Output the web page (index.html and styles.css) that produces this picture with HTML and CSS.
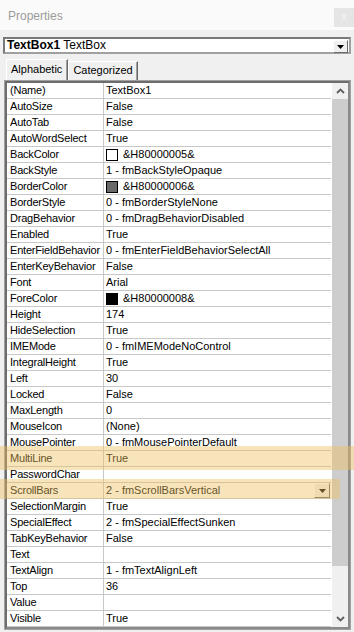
FILE: index.html
```html
<!DOCTYPE html>
<html lang="en">
<head>
  <meta charset="UTF-8" />
  <meta name="viewport" content="width=device-width, initial-scale=1.0" />
  <title>Properties</title>
  <link rel="stylesheet" href="styles.css">
</head>
<body>
<div class="titlebar">
  <span class="title">Properties</span>
  <span class="close">x</span>
</div>

<div class="combo">
  <span class="combo-text"><b>TextBox1</b> TextBox</span>
  <span class="drop-btn">
    <svg width="7" height="4" viewBox="0 0 7 4"><polygon points="0,0 7,0 3.5,4" fill="#000"/></svg>
  </span>
</div>

<div class="tabs">
  <div class="tab active">Alphabetic</div>
  <div class="tab">Categorized</div>
</div>

<div class="grid">
  <div class="grid-inner">
    <div class="rows">
      <div class="row"><div class="name">(Name)</div><div class="value">TextBox1</div></div>
      <div class="row"><div class="name">AutoSize</div><div class="value">False</div></div>
      <div class="row"><div class="name">AutoTab</div><div class="value">False</div></div>
      <div class="row"><div class="name">AutoWordSelect</div><div class="value">True</div></div>
      <div class="row"><div class="name">BackColor</div><div class="value"><span class="swatch swatch-white"></span>&amp;H80000005&amp;</div></div>
      <div class="row"><div class="name">BackStyle</div><div class="value">1 - fmBackStyleOpaque</div></div>
      <div class="row"><div class="name">BorderColor</div><div class="value"><span class="swatch swatch-gray"></span>&amp;H80000006&amp;</div></div>
      <div class="row"><div class="name">BorderStyle</div><div class="value">0 - fmBorderStyleNone</div></div>
      <div class="row"><div class="name">DragBehavior</div><div class="value">0 - fmDragBehaviorDisabled</div></div>
      <div class="row"><div class="name">Enabled</div><div class="value">True</div></div>
      <div class="row"><div class="name">EnterFieldBehavior</div><div class="value">0 - fmEnterFieldBehaviorSelectAll</div></div>
      <div class="row"><div class="name">EnterKeyBehavior</div><div class="value">False</div></div>
      <div class="row"><div class="name">Font</div><div class="value">Arial</div></div>
      <div class="row"><div class="name">ForeColor</div><div class="value"><span class="swatch swatch-black"></span>&amp;H80000008&amp;</div></div>
      <div class="row"><div class="name">Height</div><div class="value">174</div></div>
      <div class="row"><div class="name">HideSelection</div><div class="value">True</div></div>
      <div class="row"><div class="name">IMEMode</div><div class="value">0 - fmIMEModeNoControl</div></div>
      <div class="row"><div class="name">IntegralHeight</div><div class="value">True</div></div>
      <div class="row"><div class="name">Left</div><div class="value">30</div></div>
      <div class="row"><div class="name">Locked</div><div class="value">False</div></div>
      <div class="row"><div class="name">MaxLength</div><div class="value">0</div></div>
      <div class="row"><div class="name">MouseIcon</div><div class="value">(None)</div></div>
      <div class="row"><div class="name">MousePointer</div><div class="value">0 - fmMousePointerDefault</div></div>
      <div class="row"><div class="name">MultiLine</div><div class="value">True</div></div>
      <div class="row"><div class="name">PasswordChar</div><div class="value"></div></div>
      <div class="row">
        <div class="name">ScrollBars</div>
        <div class="value">
          <span class="value-text">2 - fmScrollBarsVertical</span>
          <span class="cell-btn">
            <svg width="7" height="4" viewBox="0 0 7 4"><polygon points="0,0 7,0 3.5,4" fill="#000"/></svg>
          </span>
        </div>
      </div>
      <div class="row"><div class="name">SelectionMargin</div><div class="value">True</div></div>
      <div class="row"><div class="name">SpecialEffect</div><div class="value">2 - fmSpecialEffectSunken</div></div>
      <div class="row"><div class="name">TabKeyBehavior</div><div class="value">False</div></div>
      <div class="row"><div class="name">Text</div><div class="value"></div></div>
      <div class="row"><div class="name">TextAlign</div><div class="value">1 - fmTextAlignLeft</div></div>
      <div class="row"><div class="name">Top</div><div class="value">36</div></div>
      <div class="row"><div class="name">Value</div><div class="value"></div></div>
      <div class="row"><div class="name">Visible</div><div class="value">True</div></div>
    </div>

    <div class="vscroll">
      <div class="arrow">
        <svg width="9" height="6" viewBox="0 0 9 6"><polyline points="1,5 4.5,1.5 8,5" fill="none" stroke="#606060" stroke-width="1.8"/></svg>
      </div>
      <div class="thumb"></div>
      <div class="track"></div>
      <div class="arrow">
        <svg width="9" height="6" viewBox="0 0 9 6"><polyline points="1,1 4.5,4.5 8,1" fill="none" stroke="#606060" stroke-width="1.8"/></svg>
      </div>
    </div>
  </div>
</div>

<div class="mark mark-multiline"></div>
<div class="mark mark-scrollbars"></div>
</body>
</html>
```

FILE: styles.css
```css
body {
  font-family: 'Liberation Sans', Arial, sans-serif;
  font-size: 11px;
  margin: 0;
  padding: 0;
  width: 354px;
  height: 632px;
  overflow: hidden;
  background-color: #f0f0f0;
  color: #000;
  position: relative;
}
.titlebar {
  height: 30px;
  background-color: #fafafa;
  display: flex;
  justify-content: space-between;
  align-items: flex-start;
}
.title {
  font-size: 12px;
  color: #9a9a9a;
  margin: 9px 0 0 8px;
}
.close {
  margin-top: 8px;
  width: 20px;
  height: 19px;
  background-color: #e5e5e5;
  color: #f6f6f6;
  font-size: 10px;
  line-height: 18px;
  text-align: center;
}
.combo {
  margin: 7px 3px 0 3px;
  height: 13px;
  border: 2px solid #7a7a7a;
  border-right-color: #a0a0a0;
  border-bottom-color: #a0a0a0;
  background: #fff;
  display: flex;
  align-items: center;
  justify-content: space-between;
}
.combo-text {
  font-size: 12px;
  padding-left: 2px;
  line-height: 13px;
}
.drop-btn {
  width: 13px;
  height: 11px;
  margin-right: 1px;
  margin-top: 2px;
  background: #f0f0f0;
  border: 1px solid #fff;
  border-right-color: #696969;
  border-bottom-color: #696969;
  display: flex;
  align-items: center;
  justify-content: center;
}
.tabs {
  display: flex;
  align-items: flex-end;
  height: 21px;
  margin-top: 5px;
  padding-left: 6px;
}
.tab {
  height: 18px;
  padding: 0 4px;
  line-height: 17px;
  border-top: 1px solid #fff;
  border-left: 1px solid #fff;
  border-right: 1px solid #696969;
  box-shadow: inset -1px 0 #a0a0a0;
}
.tab.active {
  height: 20px;
  line-height: 19px;
  padding: 0 5px 0 4px;
}
.grid {
  margin-left: 4px;
  width: 345px;
  height: 548px;
  border: 1px solid #a0a0a0;
}
.grid-inner {
  height: 544px;
  border: 2px solid #6d6d6d;
  border-right-color: #8a8a8a;
  border-bottom-color: #8a8a8a;
  background: #fff;
  display: flex;
}
.rows {
  width: 324px;
}
.row {
  display: flex;
  height: 15px;
  border-bottom: 1px solid #c8c8c8;
  line-height: 15px;
}
.name {
  width: 93px;
  padding-left: 3px;
  border-right: 1px solid #c8c8c8;
  white-space: nowrap;
  overflow: hidden;
  letter-spacing: -0.2px;
}
.value {
  flex: 1;
  padding-left: 2px;
  display: flex;
  align-items: center;
  white-space: nowrap;
}
.value-text {
  flex: 1;
}
.swatch {
  width: 10px;
  height: 10px;
  border: 1px solid #000;
  margin-right: 5px;
}
.swatch-white { background: #fff; }
.swatch-gray { background: #696969; }
.swatch-black { background: #000; }
.cell-btn {
  width: 14px;
  height: 13px;
  margin-right: 1px;
  background: #f0f0f0;
  border: 1px solid #fff;
  border-right-color: #696969;
  border-bottom-color: #696969;
  display: flex;
  align-items: center;
  justify-content: center;
}
.vscroll {
  width: 16px;
  margin-left: 1px;
  background: #f0f0f0;
  display: flex;
  flex-direction: column;
}
.arrow {
  height: 16px;
  display: flex;
  align-items: center;
  justify-content: center;
}
.thumb {
  height: 467px;
  background: #cdcdcd;
}
.track {
  flex: 1;
}
.mark {
  position: absolute;
  background: rgba(235, 190, 90, 0.42);
}
.mark-multiline {
  left: 0;
  top: 446px;
  width: 354px;
  height: 24px;
}
.mark-scrollbars {
  left: 0;
  top: 479px;
  width: 340px;
  height: 20px;
}
```
